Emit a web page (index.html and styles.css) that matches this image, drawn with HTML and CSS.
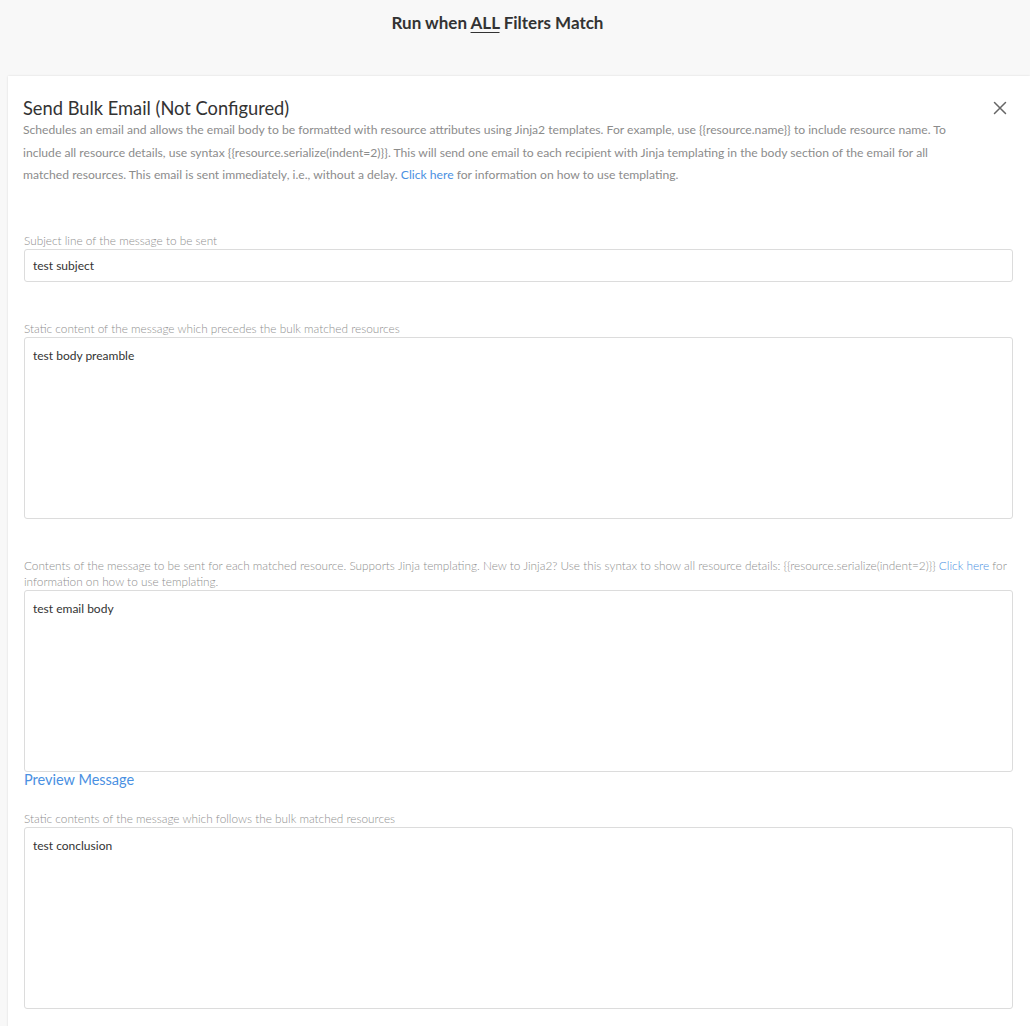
FILE: index.html
```html
<!DOCTYPE html>
<html lang="en">
<head>
<meta charset="utf-8">
<title>Send Bulk Email</title>
<link rel="stylesheet" href="styles.css">
</head>
<body>
<header class="top">
  <h1 class="top-title">Run when <u>ALL</u> Filters Match</h1>
</header>
<section class="card">
  <div class="card-head">
    <div class="head-text">
      <h2 class="card-title">Send Bulk Email (Not Configured)</h2>
      <p class="desc">Schedules an email and allows the email body to be formatted with resource attributes using Jinja2 templates. For example, use {{resource.name}} to include resource name. To include all resource details, use syntax {{resource.serialize(indent=2)}}. This will send one email to each recipient with Jinja templating in the body section of the email for all matched resources. This email is sent immediately, i.e., without a delay. <a class="link" href="#">Click here</a> for information on how to use templating.</p>
    </div>
    <button class="close" aria-label="Close">
      <svg width="14" height="14" viewBox="0 0 14 14"><path d="M1.5 1.5 L12.5 12.5 M12.5 1.5 L1.5 12.5" stroke="#666" stroke-width="1.5" fill="none" stroke-linecap="round"/></svg>
    </button>
  </div>
  <form class="form">
    <div class="field">
      <label class="label">Subject line of the message to be sent</label>
      <div class="input">test subject</div>
    </div>
    <div class="field">
      <label class="label">Static content of the message which precedes the bulk matched resources</label>
      <div class="textarea">test body preamble</div>
    </div>
    <div class="field">
      <label class="label">Contents of the message to be sent for each matched resource. Supports Jinja templating. New to Jinja2? Use this syntax to show all resource details: {{resource.serialize(indent=2)}} <a class="link" href="#">Click here</a> for information on how to use templating.</label>
      <div class="textarea">test email body</div>
      <a class="preview" href="#">Preview Message</a>
    </div>
    <div class="field field-tight">
      <label class="label">Static contents of the message which follows the bulk matched resources</label>
      <div class="textarea">test conclusion</div>
    </div>
  </form>
</section>
</body>
</html>
```
FILE: styles.css
```css
* { box-sizing: border-box; }
html, body {
  margin: 0;
  padding: 0;
  background: #f8f8f8;
  font-family: Lato, "Open Sans", Arial, sans-serif;
  color: #333;
  overflow: hidden;
}
.top {
  height: 76px;
  padding: 12px 35px 0 0;
  text-align: center;
}
.top-title {
  margin: 0;
  font-size: 17px;
  line-height: 22px;
  font-weight: 700;
  color: #333;
}
.top-title u {
  text-decoration-thickness: 1px;
  text-underline-offset: 3px;
}
.card {
  margin-left: 8px;
  width: 1022px;
  min-height: 960px;
  background: #fff;
  box-shadow: 0 0 2px rgba(0, 0, 0, 0.12);
  padding: 21px 17px 0 15px;
}
.card-head {
  display: flex;
  justify-content: space-between;
  align-items: flex-start;
}
.head-text {
  width: 935px;
}
.card-title {
  margin: 0;
  font-size: 18.3px;
  line-height: 22px;
  font-weight: 400;
  color: #333;
}
.desc {
  margin: 0;
  font-size: 12.15px;
  line-height: 22.5px;
  color: #8c8c8c;
}
.link {
  color: #4a90e2;
  text-decoration: none;
}
.close {
  border: 0;
  background: none;
  padding: 0;
  margin: 4px 6px 0 0;
  width: 14px;
  height: 14px;
  cursor: pointer;
}
.close svg { display: block; }
.form {
  margin: 46px 0 0 1px;
  display: flex;
  flex-direction: column;
  gap: 39px;
}
.field {
  display: flex;
  flex-direction: column;
}
.field-tight { margin-top: -16px; }
.label {
  display: block;
  font-size: 11.8px;
  line-height: 16px;
  font-weight: 300;
  color: #8f8f8f;
  margin-bottom: 0;
}
.input {
  height: 33px;
  border: 1px solid #dcdcdc;
  border-radius: 3px;
  padding: 0 8px;
  font-size: 12px;
  line-height: 31px;
  color: #333;
}
.textarea {
  height: 182px;
  border: 1px solid #dcdcdc;
  border-radius: 3px;
  padding: 10px 8px;
  font-size: 12px;
  line-height: 16px;
  color: #333;
}
.preview {
  font-size: 14.5px;
  line-height: 16px;
  color: #4a90e2;
  text-decoration: none;
  align-self: flex-start;
}
```
